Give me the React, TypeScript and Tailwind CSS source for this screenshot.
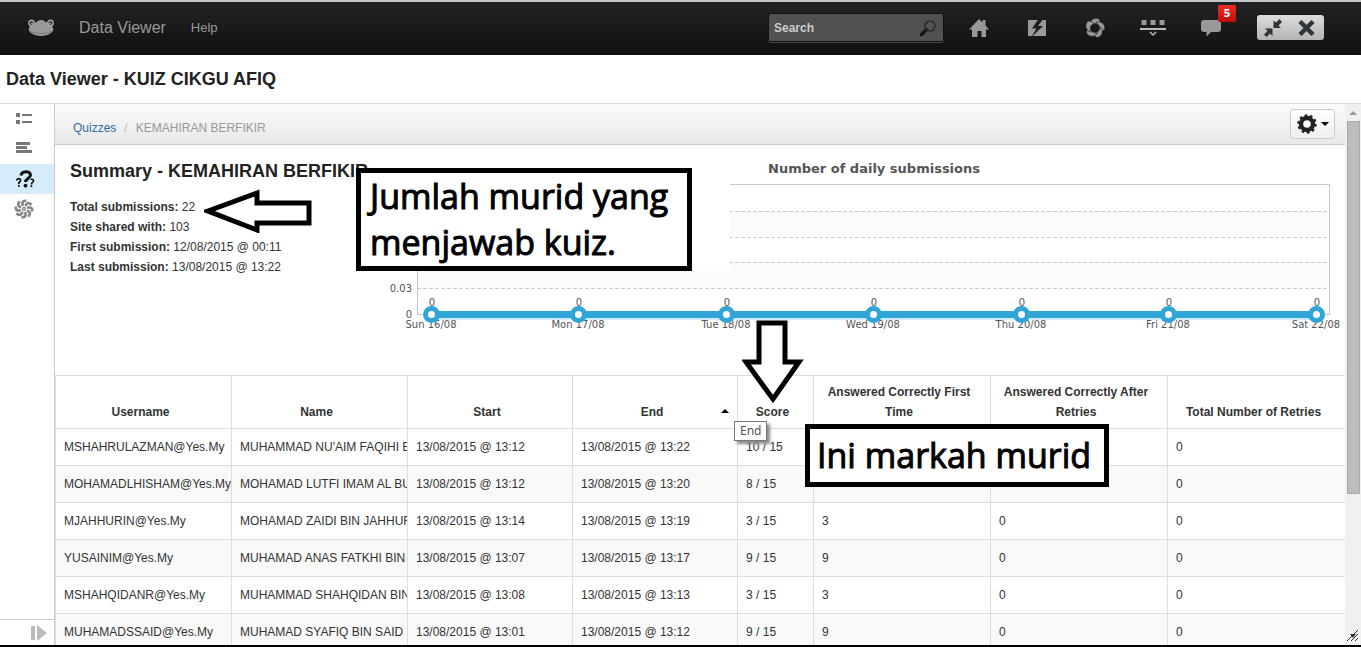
import type { ReactNode } from "react";

interface Submission {
  username: string;
  name: string;
  start: string;
  end: string;
  score: number;
  firstTime?: number;
  afterRetries?: number;
}

const TOTAL_QUESTIONS = 15;

const submissions: Submission[] = [
  { username: "MSHAHRULAZMAN@Yes.My", name: "MUHAMMAD NU'AIM FAQIHI BI", start: "13/08/2015 @ 13:12", end: "13/08/2015 @ 13:22", score: 10 },
  { username: "MOHAMADLHISHAM@Yes.My", name: "MOHAMAD LUTFI IMAM AL BU", start: "13/08/2015 @ 13:12", end: "13/08/2015 @ 13:20", score: 8 },
  { username: "MJAHHURIN@Yes.My", name: "MOHAMAD ZAIDI BIN JAHHURI", start: "13/08/2015 @ 13:14", end: "13/08/2015 @ 13:19", score: 3, firstTime: 3, afterRetries: 0 },
  { username: "YUSAINIM@Yes.My", name: "MUHAMAD ANAS FATKHI BIN Y", start: "13/08/2015 @ 13:07", end: "13/08/2015 @ 13:17", score: 9, firstTime: 9, afterRetries: 0 },
  { username: "MSHAHQIDANR@Yes.My", name: "MUHAMMAD SHAHQIDAN BIN", start: "13/08/2015 @ 13:08", end: "13/08/2015 @ 13:13", score: 3, firstTime: 3, afterRetries: 0 },
  { username: "MUHAMADSSAID@Yes.My", name: "MUHAMAD SYAFIQ BIN SAID", start: "13/08/2015 @ 13:01", end: "13/08/2015 @ 13:12", score: 9, firstTime: 9, afterRetries: 0 },
];

const summary = [
  { label: "Total submissions:", value: "22" },
  { label: "Site shared with:", value: "103" },
  { label: "First submission:", value: "12/08/2015 @ 00:11" },
  { label: "Last submission:", value: "13/08/2015 @ 13:22" },
];

const days = [
  { label: "Sun 16/08", x: 51 },
  { label: "Mon 17/08", x: 198 },
  { label: "Tue 18/08", x: 346 },
  { label: "Wed 19/08", x: 493 },
  { label: "Thu 20/08", x: 641 },
  { label: "Fri 21/08", x: 788 },
  { label: "Sat 22/08", x: 936 },
];

function FrogIcon() {
  return (
    <svg width="28" height="20" viewBox="0 0 28 20">
      <path d="M5 4Q9 5.500 10.500 3Q14 1 17.500 3Q19 5.500 23 4L25 8Q28 12 24 15Q20 18 14 18Q8 18 4 15Q0 12 3 8Z" fill="#999" />
      <path d="M3 13.500Q8 15.500 14 15.500Q20 15.500 25 13.500" fill="none" stroke="#777" strokeWidth="1" />
      <circle cx="4.500" cy="5" r="2.700" fill="#333" stroke="#aaa" strokeWidth="1.400" />
      <circle cx="23.500" cy="5" r="2.700" fill="#333" stroke="#aaa" strokeWidth="1.400" />
      <circle cx="5" cy="5.500" r="1" fill="#999" />
      <circle cx="23" cy="5.500" r="1" fill="#999" />
    </svg>
  );
}

function HomeIcon() {
  return (
    <svg width="20" height="20" viewBox="0 0 20 20" fill="#999">
      <path d="M10 1L13.5 4.5V2H16.5V7.5L20 11.5H17V19H12.5V13H8.5V19H3V11.5H0Z" />
    </svg>
  );
}

function BoltIcon() {
  return (
    <svg width="18" height="18" viewBox="0 0 18 18">
      <path d="M0 1H18V17H0Z" fill="#999" />
      <path d="M10.500 0L4 9.500H8.500L3.500 18L15 7H10L15 0Z" fill="#1b1b1b" />
    </svg>
  );
}

function KnotIcon() {
  return (
    <svg width="20" height="20" viewBox="0 0 20 20">
      {[0, 72, 144, 216, 288].map((angle) => (
        <path
          key={angle}
          d="M5 7.500C4.500 2.500 8.500 0 12 .3C15.500 1 16 4.500 13.500 7.800C12.500 5 8.500 4.500 5 7.500Z"
          fill="#999"
          stroke="#1b1b1b"
          strokeWidth=".6"
          transform={`rotate(${angle} 10 10)`}
        />
      ))}
    </svg>
  );
}

function DockIcon() {
  return (
    <svg width="26" height="18" viewBox="0 0 26 18">
      <path d="M1.500 1h5v5h-5zM10.500 1h5v5h-5zM19.500 1h5v5h-5z" fill="#999" />
      <path d="M0 10H26" stroke="#bbb" strokeWidth="2" />
      <path d="M10 13L13 16L16 13" fill="none" stroke="#bbb" strokeWidth="1.500" />
    </svg>
  );
}

function ChatIcon() {
  return (
    <svg width="20" height="18" viewBox="0 0 20 18" fill="#999">
      <path d="M3 1H17Q20 1 20 4V10Q20 13 17 13H10L5.500 17.500V13H3Q0 13 0 10V4Q0 1 3 1Z" />
    </svg>
  );
}

function SearchIcon() {
  return (
    <svg width="18" height="18" viewBox="0 0 18 18" fill="none">
      <path d="M7.500 10.500L2.500 15.500" stroke="#151515" strokeWidth="3.500" strokeLinecap="round" />
      <circle cx="11" cy="7" r="5" stroke="#2b2b2b" strokeWidth="1.700" />
    </svg>
  );
}

function CompressIcon() {
  return (
    <svg width="18" height="18" viewBox="0 0 18 18" fill="#30353c">
      <path d="M9.500 1.500V9H17L14.500 6.500L18 3L15.500 0L12 3.500Z" />
      <path d="M8.500 17V9.500H1L3.500 12L0 15.500L2.500 18L6 14.500Z" />
    </svg>
  );
}

function QuizIcon() {
  return (
    <svg width="20" height="18" viewBox="0 0 20 18" fill="none" stroke="#111">
      <path d="M6 5.500C6.500 .5 15.500 .5 15.500 5C15.500 8.500 10.500 8.500 10.500 12" strokeWidth="3" />
      <circle cx="10.500" cy="15.700" r="1.900" fill="#111" stroke="none" />
      <path d="M1.500 10.500C2 8 6 8 5.500 10.500C5 12.500 3.700 12 3.700 14M15.500 9.500C18.500 8.500 19 11 18 12C17 13 16.500 12.500 16.500 14.500" strokeWidth="1.700" />
      <path d="M3 15h1.800v1.800H3zM15.500 15.300h1.800v1.800h-1.800z" fill="#111" stroke="none" />
    </svg>
  );
}

function SwirlIcon() {
  return (
    <svg width="20" height="20" viewBox="0 0 20 20" fill="none" stroke="#858585" strokeWidth="2.600">
      {[0, 45, 90, 135, 180, 225, 270, 315].map((angle) => (
        <path key={angle} d="M8.500 7V4Q8.500 1.600 12.500 1.800" transform={`rotate(${angle} 10 10)`} />
      ))}
      <circle cx="10" cy="10" r="1.500" strokeWidth="1.300" />
    </svg>
  );
}

function GearIcon() {
  return (
    <svg width="20" height="20" viewBox="0 0 20 20" fill="none" stroke="#222">
      <circle cx="10" cy="10" r="6" strokeWidth="4.400" />
      <circle cx="10" cy="10" r="8.700" strokeWidth="2" strokeDasharray="2.733 2.733" />
    </svg>
  );
}

function NavButton({ label, children }: { label: string; children: ReactNode }) {
  return (
    <button aria-label={label} className="relative flex h-8 w-[58px] items-center justify-center">
      {children}
    </button>
  );
}

function TopBar() {
  return (
    <header className="flex h-[55px] shrink-0 items-center border-t-2 border-[#c3c8c8] bg-linear-to-b from-[#222] to-[#111] pr-[37px] pb-0.5 pl-[27px]">
      <a href="#home" aria-label="Frog">
        <FrogIcon />
      </a>
      <a href="#viewer" className="ml-6 text-base text-[#999]">Data Viewer</a>
      <a href="#help" className="ml-[25px] text-[13px] text-[#999]">Help</a>
      <form className="mr-1.5 ml-auto flex h-[29px] w-[176px] items-center rounded-[3px] border border-[#111] bg-[#515151] pr-1.5 pl-[5px] shadow-[0_1px_0_#444]">
        <input
          type="text"
          aria-label="Search"
          placeholder="Search"
          className="min-w-0 flex-1 bg-transparent text-xs font-bold text-[#ccc] outline-none placeholder:text-[#ccc]"
        />
        <button type="button" aria-label="Submit search">
          <SearchIcon />
        </button>
      </form>
      <nav className="flex">
        <NavButton label="Home"><HomeIcon /></NavButton>
        <NavButton label="Quick launch"><BoltIcon /></NavButton>
        <NavButton label="Apps"><KnotIcon /></NavButton>
        <NavButton label="Dock"><DockIcon /></NavButton>
        <NavButton label="Messages">
          <ChatIcon />
          <span className="absolute -top-[7px] right-1 flex h-[17px] w-[18px] items-center justify-center rounded-[2px] bg-linear-to-b from-[#ee2c24] to-[#c00a0a] font-['DejaVu_Sans'] text-[10px] font-bold text-white">
            5
          </span>
        </NavButton>
      </nav>
      <div className="ml-[17px] flex h-[25px] w-[67px] items-center justify-between rounded-[3px] bg-linear-to-b from-[#ddd] to-[#b4b4b4] px-[7px]">
        <button aria-label="Exit full screen">
          <CompressIcon />
        </button>
        <button aria-label="Close">
          <svg width="20" height="18" viewBox="0 0 20 18" stroke="#30353c" strokeWidth="4.500">
            <path d="M3 2.500L16 15.500M16 2.500L3 15.500" />
          </svg>
        </button>
      </div>
    </header>
  );
}

function SideBar() {
  return (
    <aside className="flex w-[55px] shrink-0 flex-col border-r border-[#ccc]">
      <a href="#list" aria-label="List" className="flex h-[30px] items-center justify-center pr-1.5 pb-0.5">
        <svg width="16" height="12" viewBox="0 0 16 12" fill="#777">
          <path d="M0 1h4v4H0zM0 8h4v4H0zM6 2h10v2H6zM6 9h10v2H6z" />
        </svg>
      </a>
      <a href="#reports" aria-label="Reports" className="flex h-[30px] items-center justify-center pr-1.5 pb-0.5">
        <svg width="16" height="12" viewBox="0 0 16 12" fill="#777">
          <path d="M0 0h14v3H0zM0 4h11v3H0zM0 8h16v3H0z" />
        </svg>
      </a>
      <a href="#quizzes" aria-label="Quizzes" className="flex h-[30px] items-center justify-center bg-[#d5edfb] pr-1">
        <QuizIcon />
      </a>
      <a href="#activity" aria-label="Activity" className="flex h-[30px] items-center justify-center pr-1.5">
        <SwirlIcon />
      </a>
      <button aria-label="Expand sidebar" className="mt-auto flex h-[26px] items-center justify-end border-t border-[#ccc] pr-[7px]">
        <svg width="16" height="16" viewBox="0 0 16 16" fill="#bbb">
          <path d="M0 1h4v14H0zM6 0L16 8L6 16z" />
        </svg>
      </button>
    </aside>
  );
}

function SubmissionsChart() {
  return (
    <svg viewBox="0 0 965 230" className="min-w-0 flex-1 font-['DejaVu_Sans'] text-[10px]" fill="#555">
      <text x="494" y="28" textAnchor="middle" className="text-[13px] font-bold">
        Number of daily submissions
      </text>
      <path d="M37 66H949V92H37zM37 117H949V143H37z" fill="#fafbfd" />
      <path d="M37 66.500H949M37 92.500H949M37 117.500H949M37 143.500H949" stroke="#c5cdd5" strokeDasharray="4 2" />
      <path d="M37.500 39.500H949.500V169.500H37.500Z" fill="none" stroke="#c4c6c9" />
      <text x="32" y="147" textAnchor="end">0.03</text>
      <text x="32" y="173" textAnchor="end">0</text>
      {days.map((day) => (
        <g key={day.label} textAnchor="middle">
          <text x={day.x} y="183">{day.label}</text>
          <text x={day.x + 1} y="161">0</text>
        </g>
      ))}
      <path d="M51 170.500H936" stroke="#d3edf8" strokeWidth="9" />
      <path d="M51 169.500H936" stroke="#30a5d8" strokeWidth="7" />
      {days.map((day) => (
        <circle key={day.label} cx={day.x + 0.5} cy="169.500" r="6" fill="#fff" stroke="#30a5d8" strokeWidth="5" />
      ))}
    </svg>
  );
}

function HeaderCell({ children }: { children: ReactNode }) {
  return (
    <th className="relative h-[53px] border-t border-l border-[#ddd] pr-3.5 pb-1.5 pl-2 align-bottom font-bold">
      {children}
    </th>
  );
}

function Cell({ children }: { children: ReactNode }) {
  return (
    <td className="overflow-hidden border-t border-l border-[#ddd] py-2 pl-2 whitespace-nowrap">
      {children}
    </td>
  );
}

function SubmissionsTable() {
  return (
    <table className="w-full table-fixed border-separate border-spacing-0 text-xs leading-5">
      <colgroup>
        <col className="w-[176px]" />
        <col className="w-[176px]" />
        <col className="w-[165px]" />
        <col className="w-[165px]" />
        <col className="w-[76px]" />
        <col className="w-[177px]" />
        <col className="w-[177px]" />
        <col className="w-[178px]" />
      </colgroup>
      <thead>
        <tr>
          <HeaderCell>Username</HeaderCell>
          <HeaderCell>Name</HeaderCell>
          <HeaderCell>Start</HeaderCell>
          <HeaderCell>
            End
            <svg width="8" height="4" viewBox="0 0 8 4" className="absolute right-2 bottom-[15px]">
              <path d="M0 4L4 0L8 4Z" />
            </svg>
          </HeaderCell>
          <HeaderCell>Score</HeaderCell>
          <HeaderCell>Answered Correctly First Time</HeaderCell>
          <HeaderCell>Answered Correctly After Retries</HeaderCell>
          <HeaderCell>Total Number of Retries</HeaderCell>
        </tr>
      </thead>
      <tbody>
        {submissions.map((row) => (
          <tr key={row.username} className="even:bg-[#f9f9f9]">
            <Cell>{row.username}</Cell>
            <Cell>{row.name}</Cell>
            <Cell>{row.start}</Cell>
            <Cell>{row.end}</Cell>
            <Cell>{row.score} / {TOTAL_QUESTIONS}</Cell>
            <Cell>{row.firstTime}</Cell>
            <Cell>{row.afterRetries}</Cell>
            <Cell>0</Cell>
          </tr>
        ))}
      </tbody>
    </table>
  );
}

/* Notes drawn on top of the report */
function Annotations() {
  return (
    <>
      <svg width="110" height="44" viewBox="0 0 110 44" className="absolute top-[85px] left-[149px]">
        <path d="M4 22L53 4V14H105V34H53V41Z" fill="#fff" stroke="#000" strokeWidth="5" />
      </svg>
      <div className="absolute top-16 left-[301px] w-[374px] bg-white">
        <p className="h-[103px] w-[336px] border-[5px] border-black bg-white pl-[9px] font-['Open_Sans'] text-[34px] leading-[46px] whitespace-nowrap text-black [-webkit-text-stroke:1px_black]">
          Jumlah murid yang
          <br />
          menjawab kuiz.
        </p>
      </div>
      <svg width="62" height="84" viewBox="0 0 62 84" className="absolute top-[215px] left-[687px]">
        <path d="M17 4H43V43H57L31 80L4 43H17Z" fill="#fff" stroke="#000" strokeWidth="5" />
      </svg>
      <span role="tooltip" className="absolute top-[317px] left-[679px] border border-[#777] bg-white px-[5px] font-['Noto_Sans'] text-xs leading-[18px] text-[#555] shadow-[3px_3px_3px_#888]">
        End
      </span>
      <p className="absolute top-80 left-[750px] w-[304px] border-[5px] border-black bg-white pt-[3px] pb-1 pl-[7px] font-['Open_Sans'] text-[34px] leading-[46px] whitespace-nowrap text-black [-webkit-text-stroke:1px_black]">
        Ini markah murid
      </p>
    </>
  );
}

function ScrollBar() {
  return (
    <div className="flex w-4 shrink-0 flex-col items-center bg-[#f0f0f0]">
      <svg width="8" height="17" viewBox="0 0 8 17" fill="#999">
        <path d="M0 11L4 7L8 11Z" />
      </svg>
      <div className="h-[69%] w-[13px] border border-[#a8a8a8] bg-[#bcbcbc]" />
      <svg width="12" height="12" viewBox="0 0 12 12" className="mt-auto mb-[3px]" stroke="#333">
        <path d="M0 11L11 0M4 11L11 4M8 11L11 8" />
        <path d="M3 4H9L6 8Z" fill="#333" stroke="none" />
      </svg>
    </div>
  );
}

export default function App() {
  return (
    <div className="flex h-screen flex-col overflow-hidden border-b-2 border-black bg-white font-['Liberation_Sans',sans-serif] text-[#333]">
      <TopBar />
      <h1 className="flex h-12 shrink-0 items-center px-1.5 text-lg font-bold text-[#222]">
        Data Viewer - KUIZ CIKGU AFIQ
      </h1>
      <div className="flex min-h-0 flex-1 border-t border-[#ddd]">
        <SideBar />
        <main className="relative min-w-0 flex-1 overflow-hidden">
          <div className="flex h-[41px] items-center justify-between border-b border-[#ccc] bg-linear-to-b from-[#fbfbfb] to-[#e8e8e8] pr-2.5 pl-[18px]">
            <nav className="flex gap-2 pt-2 text-xs">
              <a href="#quizzes" className="text-[#2a6fa8]">Quizzes</a>
              <span className="text-[#bbb]">/</span>
              <span className="text-[#999]">KEMAHIRAN BERFIKIR</span>
            </nav>
            <button aria-label="Settings" className="flex h-[30px] w-[45px] items-center justify-center gap-1 rounded-[3px] border border-[#ccc] bg-linear-to-b from-white to-[#eee]">
              <GearIcon />
              <svg width="8" height="4" viewBox="0 0 8 4">
                <path d="M0 0H8L4 4Z" />
              </svg>
            </button>
          </div>
          <section className="flex items-start">
            <div className="w-[325px] shrink-0 pt-4 pl-[15px]">
              <h2 className="mb-4 text-lg leading-5 font-bold whitespace-nowrap text-[#222]">
                Summary - KEMAHIRAN BERFIKIR
              </h2>
              <ul className="text-xs leading-5">
                {summary.map((item) => (
                  <li key={item.label}>
                    <b>{item.label}</b> {item.value}
                  </li>
                ))}
              </ul>
            </div>
            <SubmissionsChart />
          </section>
          <SubmissionsTable />
          <Annotations />
        </main>
        <ScrollBar />
      </div>
    </div>
  );
}
